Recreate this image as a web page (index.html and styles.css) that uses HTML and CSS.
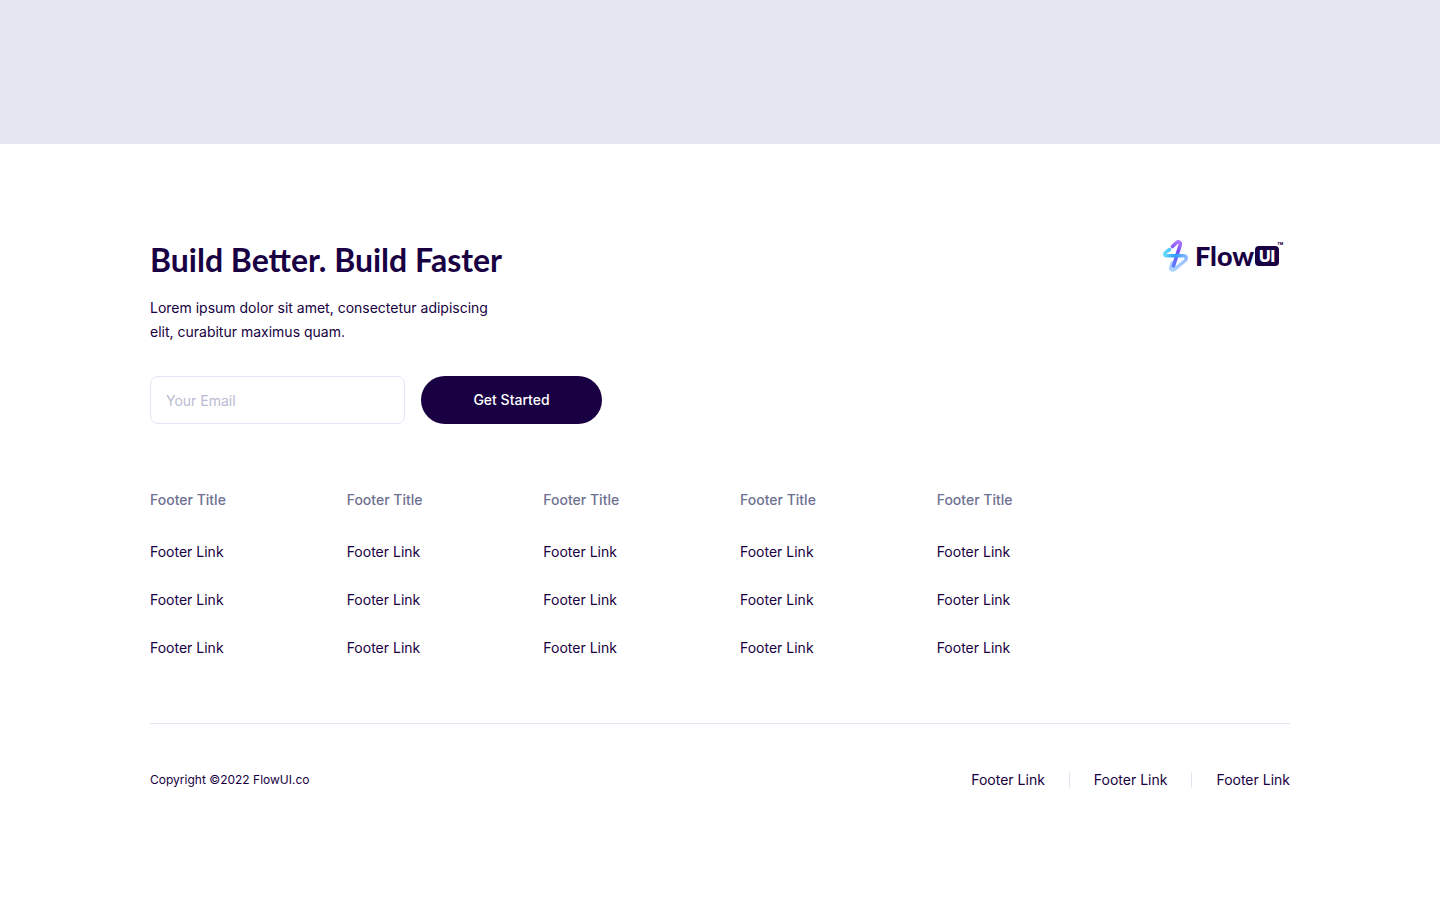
FILE: index.html
```html
<!DOCTYPE html>
<html lang="en">

<head>
  <meta charset="UTF-8">
  <meta name="viewport" content="width=device-width, initial-scale=1">
  <title>FlowUI</title>
  <link rel="stylesheet" href="styles.css">
</head>

<body>
  <div class="page-end"></div>

  <footer class="footer">
    <div class="footer-top">
      <div class="signup">
        <h2>Build Better. Build Faster</h2>
        <p>Lorem ipsum dolor sit amet, consectetur adipiscing elit, curabitur maximus quam.</p>
        <form class="signup-form">
          <input type="email" name="email" placeholder="Your Email" aria-label="Your Email">
          <button type="submit">Get Started</button>
        </form>
      </div>

      <a class="logo" href="#" aria-label="FlowUI">
        <svg width="128" height="32" viewBox="0 0 128 32" fill="none">
          <defs>
            <linearGradient id="top" x1="17" y1="1" x2="12" y2="26" gradientUnits="userSpaceOnUse">
              <stop offset="0" stop-color="#b07aff" />
              <stop offset="0.4" stop-color="#7350f5" />
              <stop offset="1" stop-color="#5b7cff" />
            </linearGradient>
            <linearGradient id="across" x1="1" y1="12" x2="26" y2="18" gradientUnits="userSpaceOnUse">
              <stop offset="0" stop-color="#6fe6fa" />
              <stop offset="0.5" stop-color="#2b9bfb" />
              <stop offset="1" stop-color="#9fc0ff" />
            </linearGradient>
            <linearGradient id="bottom" x1="25" y1="18" x2="9" y2="30" gradientUnits="userSpaceOnUse">
              <stop offset="0" stop-color="#9fc0ff" />
              <stop offset="1" stop-color="#a8d2ff" />
            </linearGradient>
          </defs>
          <path d="M24 17.500Q25 19 23 20.800L12.500 29.300C10 31 8 29.500 8.900 26.800L10.200 23" stroke="url(#bottom)" stroke-width="3.400" stroke-linecap="round" />
          <path d="M10.500 6.500L14.300 2.800C16.800 0.800 19 2.400 18.200 5L11.500 26" stroke="url(#top)" stroke-width="3.600" stroke-linecap="round" />
          <path d="M7.500 9.500L3.600 12.300C1.800 13.800 2.500 15.800 4.800 15.800H21.500Q24 15.800 24.300 18" stroke="url(#across)" stroke-width="3.400" stroke-linecap="round" />
          <text class="logo-word" x="33" y="26">Flow</text>
          <rect x="93" y="6" width="24" height="20" rx="4" fill="#180042" />
          <text class="logo-ui" x="105" y="22" text-anchor="middle">UI</text>
          <text class="logo-tm" x="115" y="10">™</text>
        </svg>
      </a>
    </div>

    <nav class="footer-nav">
      <div class="column">
        <h3>Footer Title</h3>
        <a href="#">Footer Link</a>
        <a href="#">Footer Link</a>
        <a href="#">Footer Link</a>
      </div>
      <div class="column">
        <h3>Footer Title</h3>
        <a href="#">Footer Link</a>
        <a href="#">Footer Link</a>
        <a href="#">Footer Link</a>
      </div>
      <div class="column">
        <h3>Footer Title</h3>
        <a href="#">Footer Link</a>
        <a href="#">Footer Link</a>
        <a href="#">Footer Link</a>
      </div>
      <div class="column">
        <h3>Footer Title</h3>
        <a href="#">Footer Link</a>
        <a href="#">Footer Link</a>
        <a href="#">Footer Link</a>
      </div>
      <div class="column">
        <h3>Footer Title</h3>
        <a href="#">Footer Link</a>
        <a href="#">Footer Link</a>
        <a href="#">Footer Link</a>
      </div>
    </nav>

    <div class="footer-bottom">
      <small>Copyright ©2022 FlowUI.co</small>
      <div class="bottom-links">
        <a href="#">Footer Link</a>
        <a href="#">Footer Link</a>
        <a href="#">Footer Link</a>
      </div>
    </div>
  </footer>
</body>

</html>
```

FILE: styles.css
```css
* {
  box-sizing: border-box;
}

body {
  margin: 0;
  background-color: #fff;
  color: #180042;
  font-family: Inter, sans-serif;
  font-size: 14px;
  line-height: 24px;
}

a {
  color: inherit;
  text-decoration: none;
}

a:hover {
  text-decoration: underline;
}

.page-end {
  height: 144px;
  background-color: #e4e6f1;
}

.footer {
  max-width: 1188px;
  margin: 0 auto;
  padding: 96px 24px;
}

.footer-top {
  display: flex;
  justify-content: space-between;
  align-items: flex-start;
}

.signup h2 {
  margin: 0 0 16px;
  font-family: Lato, sans-serif;
  font-size: 32px;
  font-weight: 700;
  line-height: 40px;
}

.signup p {
  max-width: 352px;
  margin: 0 0 32px;
}

.signup-form {
  display: flex;
  gap: 16px;
}

.signup-form input {
  width: 255px;
  height: 48px;
  padding: 0 15px;
  border: 1px solid #e4e4f3;
  border-radius: 8px;
  color: inherit;
  font: inherit;
}

.signup-form input::placeholder {
  color: #b9bbd0;
}

.signup-form button {
  width: 181px;
  height: 48px;
  border: none;
  border-radius: 24px;
  background-color: #180042;
  color: #fff;
  font: inherit;
  font-weight: 500;
  cursor: pointer;
}

.logo svg {
  display: block;
}

.logo-word {
  fill: #180042;
  font-family: Lato, sans-serif;
  font-size: 27px;
  font-weight: 900;
}

.logo-ui {
  fill: #fff;
  font-size: 16px;
  font-weight: 800;
}

.logo-tm {
  fill: #180042;
  font-size: 10px;
  font-weight: 700;
}

.footer-nav {
  display: grid;
  grid-template-columns: repeat(6, 1fr);
  gap: 40px;
  padding: 64px 0 63px;
  border-bottom: 1px solid #e4e4f0;
}

.column {
  display: flex;
  flex-direction: column;
  align-items: flex-start;
  gap: 24px;
}

.column h3 {
  margin: 0 0 4px;
  color: #6e7191;
  font-size: 14px;
  font-weight: 500;
}

.footer-bottom {
  display: flex;
  justify-content: space-between;
  align-items: center;
  padding-top: 44px;
}

.footer-bottom small {
  font-size: 12px;
}

.bottom-links {
  display: flex;
  align-items: center;
  line-height: 16px;
}

.bottom-links a + a {
  margin-left: 24px;
  padding-left: 24px;
  border-left: 1px solid #e4e4f0;
}
```
